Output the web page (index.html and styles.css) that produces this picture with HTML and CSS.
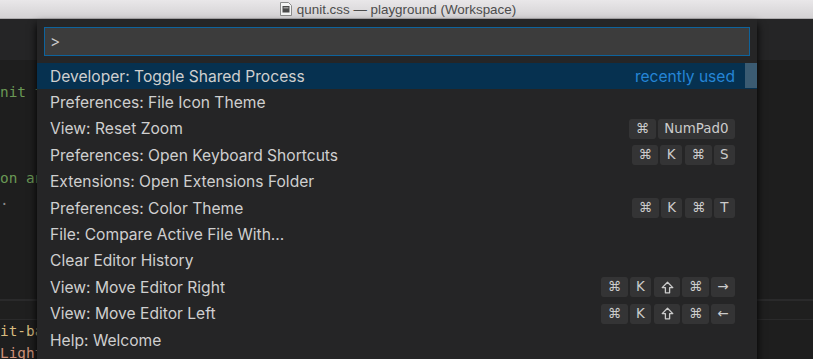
FILE: index.html
```html
<!DOCTYPE html>
<html>
<head>
<meta charset="utf-8">
<link rel="stylesheet" href="styles.css">
</head>
<body>
<div class="window">
  <div class="titlebar">
    <svg class="file-icon" width="12" height="14" viewBox="0 0 12 14">
      <path d="M0.5 0.5 H8.5 L11.5 3.5 V13.5 H0.5 Z" fill="#f4f4f4" stroke="#8a8a8a"/>
      <rect x="2.5" y="4" width="7" height="6.5" fill="#4a4a4a"/>
      <rect x="3.5" y="5" width="5" height="1.5" fill="#9a9a9a"/>
    </svg>
    <span class="title">qunit.css — playground (Workspace)</span>
  </div>
  <div class="workbench">
    <div class="tabs"></div>
    <div class="editor">
      <div class="line"></div>
      <div class="line comment">nit tests</div>
      <div class="line"></div>
      <div class="line"></div>
      <div class="line"></div>
      <div class="line comment shift">ion and</div>
      <div class="line dim">.</div>
    </div>
    <div class="peek-bar"></div>
    <div class="editor lower">
      <div class="line yellow">it-bar</div>
      <div class="line orange">Light</div>
    </div>

    <div class="quick-open">
      <div class="input"><span>&gt;</span></div>
      <div class="list">
        <div class="slider"></div>
        <div class="row selected"><span class="label">Developer: Toggle Shared Process</span><span class="group">recently used</span></div>
        <div class="row"><span class="label">Preferences: File Icon Theme</span></div>
        <div class="row"><span class="label">View: Reset Zoom</span>
          <span class="keys"><span class="chord"><kbd>⌘</kbd><kbd>NumPad0</kbd></span></span></div>
        <div class="row"><span class="label">Preferences: Open Keyboard Shortcuts</span>
          <span class="keys"><span class="chord"><kbd>⌘</kbd><kbd>K</kbd></span><span class="chord"><kbd>⌘</kbd><kbd>S</kbd></span></span></div>
        <div class="row"><span class="label">Extensions: Open Extensions Folder</span></div>
        <div class="row"><span class="label">Preferences: Color Theme</span>
          <span class="keys"><span class="chord"><kbd>⌘</kbd><kbd>K</kbd></span><span class="chord"><kbd>⌘</kbd><kbd>T</kbd></span></span></div>
        <div class="row"><span class="label">File: Compare Active File With...</span></div>
        <div class="row"><span class="label">Clear Editor History</span></div>
        <div class="row"><span class="label">View: Move Editor Right</span>
          <span class="keys"><span class="chord"><kbd>⌘</kbd><kbd>K</kbd></span><span class="chord"><kbd class="icon-key"><svg class="shift-icon" width="13" height="13" viewBox="0 0 13 13"><path d="M6.5 1.2 L11.8 6.6 H8.6 V11.8 H4.4 V6.6 H1.2 Z" fill="none" stroke="#cccccc" stroke-width="1.3" stroke-linejoin="round"/></svg></kbd><kbd>⌘</kbd><kbd>→</kbd></span></span></div>
        <div class="row"><span class="label">View: Move Editor Left</span>
          <span class="keys"><span class="chord"><kbd>⌘</kbd><kbd>K</kbd></span><span class="chord"><kbd class="icon-key"><svg class="shift-icon" width="13" height="13" viewBox="0 0 13 13"><path d="M6.5 1.2 L11.8 6.6 H8.6 V11.8 H4.4 V6.6 H1.2 Z" fill="none" stroke="#cccccc" stroke-width="1.3" stroke-linejoin="round"/></svg></kbd><kbd>⌘</kbd><kbd>←</kbd></span></span></div>
        <div class="row"><span class="label">Help: Welcome</span></div>
      </div>
    </div>
  </div>
</div>
</body>
</html>
```
FILE: styles.css
```css
* { box-sizing: border-box; }
html, body {
  margin: 0;
  padding: 0;
  background: #1e1e1e;
  overflow: hidden;
}
.window {
  width: 813px;
  height: 359px;
  display: flex;
  flex-direction: column;
  overflow: hidden;
}
.titlebar {
  height: 19px;
  flex: none;
  background: linear-gradient(#e9e7e9, #d4d2d4);
  border-bottom: 1px solid #aeacae;
  display: flex;
  align-items: center;
  justify-content: center;
  font-family: "Liberation Sans", Arial, sans-serif;
  font-size: 13.4px;
  color: #4c4c4c;
}
.file-icon {
  margin-left: -17px;
  margin-right: 5px;
  flex: none;
}

.workbench {
  position: relative;
  flex: 1;
  display: flex;
  flex-direction: column;
}
.tabs {
  height: 41px;
  flex: none;
  background: #252526;
}
.editor {
  height: 239px;
  flex: none;
  background: #1e1e1e;
  font-family: "DejaVu Sans Mono", "Liberation Mono", monospace;
  font-size: 14.4px;
  line-height: 21.6px;
  color: #d4d4d4;
}
.line {
  height: 21.6px;
  white-space: pre;
}
.comment { color: #6a9955; }
.shift { margin-left: -8.7px; }
.dim { color: #8a8a8a; }
.peek-bar {
  height: 21px;
  flex: none;
  border-top: 2px solid #2a2a2b;
  border-bottom: 1px solid #2a2a2b;
  background: #1f1f1f;
}
.editor.lower {
  flex: 1;
  padding-top: 1px;
}
.yellow { color: #d7ba7d; }
.orange { color: #ce9178; }

.quick-open {
  position: absolute;
  left: 37px;
  top: 0;
  width: 720px;
  height: 360px;
  background: #252526;
  box-shadow: 0 5px 8px #000;
  padding-top: 8px;
  font-family: Inter, Roboto, "Liberation Sans", sans-serif;
  font-size: 15.6px;
  color: #cfcfcf;
}
.input {
  margin: 0 7px;
  height: 29px;
  background: #3c3c3c;
  border: 1px solid #0e639c;
  display: flex;
  align-items: center;
  padding-left: 5px;
  color: #cccccc;
}
.list {
  position: relative;
  margin-top: 7px;
}
.row {
  height: 26.4px;
  display: flex;
  align-items: center;
  justify-content: space-between;
  padding: 0 22px 0 13px;
  white-space: nowrap;
}
.row.selected { background: #063150; }
.group { color: #2585d6; }
.slider {
  position: absolute;
  right: 0;
  top: 0;
  width: 12px;
  height: 25px;
  background: #3b5b72;
}
.keys {
  display: flex;
  gap: 3px;
}
.chord {
  display: flex;
  gap: 2px;
}
kbd {
  font-family: "DejaVu Sans", Roboto, sans-serif;
  font-size: 13.4px;
  height: 20px;
  line-height: 20px;
  padding: 0 6.5px;
  border-radius: 3px;
  background: rgba(128, 128, 128, 0.17);
  color: #cccccc;
}
.icon-key {
  display: flex;
  align-items: center;
}
.shift-icon { display: block; }
```
